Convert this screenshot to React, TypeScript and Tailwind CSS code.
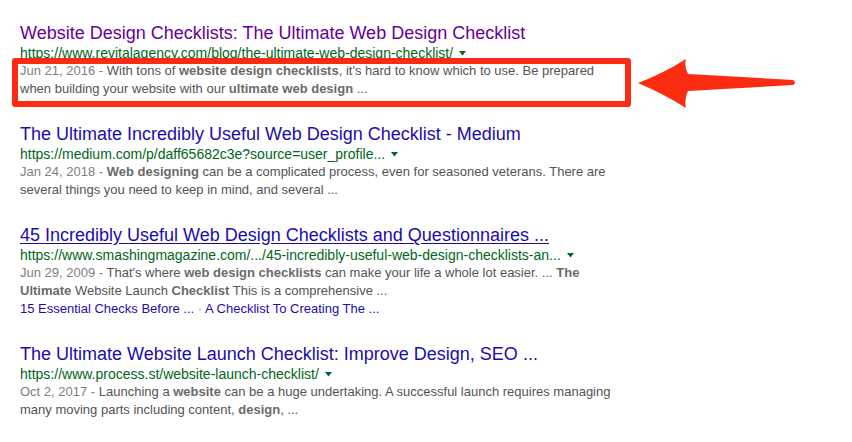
import React from 'react';

type Part = string | { b: string };

type Result = {
  title: string;
  visited?: boolean;
  underline?: boolean;
  url: string;
  date: string;
  snippet: Part[];
  sitelinks?: string[];
};

const RESULTS: Result[] = [
  {
    title: 'Website Design Checklists: The Ultimate Web Design Checklist',
    visited: true,
    url: 'https://www.revitalagency.com/blog/the-ultimate-web-design-checklist/',
    date: 'Jun 21, 2016',
    snippet: [
      'With tons of ',
      { b: 'website design checklists' },
      ", it's hard to know which to use. Be prepared when building your website with our ",
      { b: 'ultimate web design' },
      ' ...',
    ],
  },
  {
    title: 'The Ultimate Incredibly Useful Web Design Checklist - Medium',
    url: 'https://medium.com/p/daff65682c3e?source=user_profile...',
    date: 'Jan 24, 2018',
    snippet: [
      { b: 'Web designing' },
      ' can be a complicated process, even for seasoned veterans. There are several things you need to keep in mind, and several ...',
    ],
  },
  {
    title: '45 Incredibly Useful Web Design Checklists and Questionnaires ...',
    underline: true,
    url: 'https://www.smashingmagazine.com/.../45-incredibly-useful-web-design-checklists-an...',
    date: 'Jun 29, 2009',
    snippet: [
      "That's where ",
      { b: 'web design checklists' },
      ' can make your life a whole lot easier. ... ',
      { b: 'The Ultimate' },
      ' Website Launch ',
      { b: 'Checklist' },
      ' This is a comprehensive ...',
    ],
    sitelinks: ['15 Essential Checks Before ...', 'A Checklist To Creating The ...'],
  },
  {
    title: 'The Ultimate Website Launch Checklist: Improve Design, SEO ...',
    url: 'https://www.process.st/website-launch-checklist/',
    date: 'Oct 2, 2017',
    snippet: [
      'Launching a ',
      { b: 'website' },
      ' can be a huge undertaking. A successful launch requires managing many moving parts including content, ',
      { b: 'design' },
      ', ...',
    ],
  },
];

function DropArrow() {
  return (
    <svg width="7" height="5" viewBox="0 0 7 5" className="ml-[6px] inline-block align-middle">
      <path d="M0 0 L7 0 L3.5 4.5 Z" fill="#006621" />
    </svg>
  );
}

function ResultItem({ r, highlight }: { r: Result; highlight?: boolean }) {
  return (
    <div className="flex flex-col">
      <a
        className={`text-[18px] leading-[22px] whitespace-nowrap ${
          r.visited ? 'text-[#609]' : 'text-[#1a0dab]'
        } ${r.underline ? 'underline underline-offset-[2px]' : ''}`}
      >
        {r.title}
      </a>
      <div className="flex items-center text-[14px] leading-[18px] text-[#006621] whitespace-nowrap">
        <span>{r.url}</span>
        <DropArrow />
      </div>
      <div className="relative w-[592px]">
        <p className="text-[13px] leading-[18px] text-[#545454]">
          <span className="text-[#808080]">{r.date} - </span>
          {r.snippet.map((p, i) =>
            typeof p === 'string' ? (
              <span key={i}>{p}</span>
            ) : (
              <b key={i} className="font-bold text-[#6a6a6a]">
                {p.b}
              </b>
            )
          )}
        </p>
        {highlight && (
          <div className="absolute left-[-8px] top-[-4px] h-[49px] w-[619px] rounded-[3px] border-[6px] border-[#fb2c12]" />
        )}
      </div>
      {r.sitelinks && (
        <div className="text-[13px] leading-[18px] text-[#1a0dab] whitespace-nowrap">
          {r.sitelinks[0]}
          <span className="text-[#808080]"> · </span>
          {r.sitelinks[1]}
        </div>
      )}
    </div>
  );
}

export default function App() {
  return (
    <div
      className="relative h-[442px] w-[852px] overflow-hidden bg-white pl-[20px] pt-[22px]"
      style={{ fontFamily: '"Liberation Sans", Arial, sans-serif' }}
    >
      <div className="flex flex-col gap-[25px]">
        {RESULTS.map((r, i) => (
          <ResultItem key={i} r={r} highlight={i === 0} />
        ))}
      </div>

      {/* annotation arrow */}
      <svg className="absolute left-0 top-0" width="852" height="442" viewBox="0 0 852 442">
        <path
          d="M638 83 Q664 73 686 59 Q684 67 688 74 L793 80 Q797 83 793 85 L688 91 Q684 99 686 108 Q664 94 638 83 Z"
          fill="#fb2c12"
        />
      </svg>
    </div>
  );
}
